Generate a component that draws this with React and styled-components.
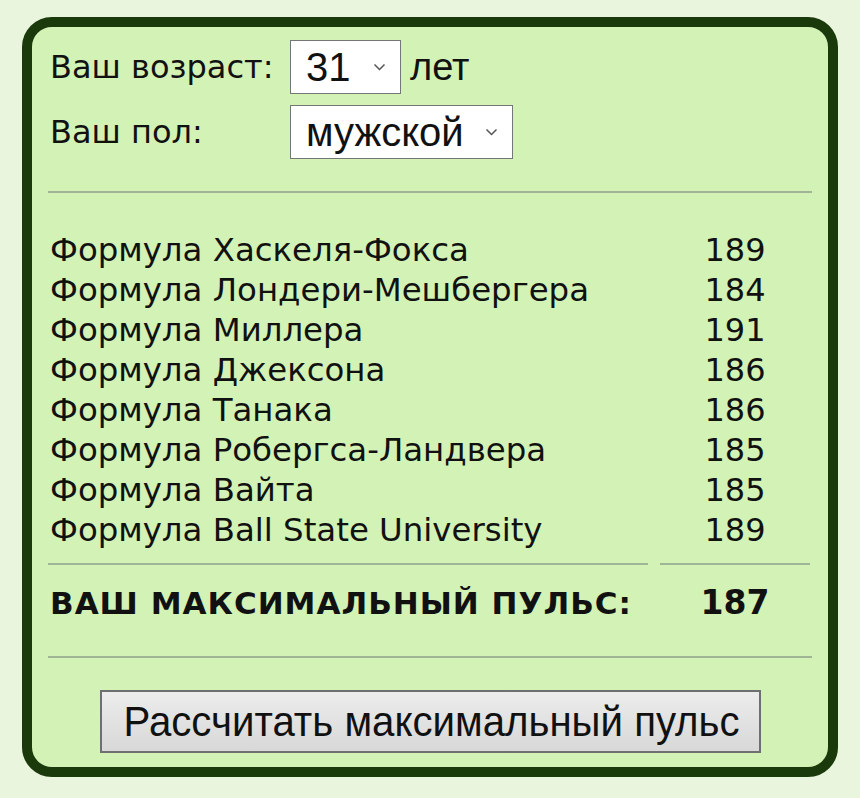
import styled, { createGlobalStyle } from "styled-components";

const formulas = [
  ["Формула Хаскеля-Фокса", 189],
  ["Формула Лондери-Мешбергера", 184],
  ["Формула Миллера", 191],
  ["Формула Джексона", 186],
  ["Формула Танака", 186],
  ["Формула Робергса-Ландвера", 185],
  ["Формула Вайта", 185],
  ["Формула Ball State University", 189],
];

const GlobalStyle = createGlobalStyle`
  body {
    margin: 0;
    background: #e9f6dd;
    font-family: "DejaVu Sans", Verdana, sans-serif;
    color: #111;
  }
`;

const App = () => {
  return (
    <>
      <GlobalStyle />
      <Card>
        <Form>
          <Label>Ваш возраст:</Label>
          <Field>
            <Select $w={111}>
              <span>31</span>
              <Chevron />
            </Select>
            <Unit>лет</Unit>
          </Field>
          <Label>Ваш пол:</Label>
          <Field>
            <Select $w={223}>
              <span>мужской</span>
              <Chevron />
            </Select>
          </Field>
        </Form>
        <Rule />
        <Table>
          <tbody>
            {formulas.map(([name, value], i) => (
              <Row key={name} $last={i === formulas.length - 1}>
                <Name>{name}</Name>
                <Value>{value}</Value>
              </Row>
            ))}
            <TotalRow>
              <TotalLabel>ВАШ МАКСИМАЛЬНЫЙ ПУЛЬС:</TotalLabel>
              <TotalValue>187</TotalValue>
            </TotalRow>
          </tbody>
        </Table>
        <Rule />
        <Actions>
          <Button>
            <ButtonText>Рассчитать максимальный пульс</ButtonText>
          </Button>
        </Actions>
      </Card>
    </>
  );
};

const Chevron = () => (
  <svg width="13" height="8" viewBox="0 0 13 8">
    <path d="M1.5 1.5l5 5 5-5" fill="none" stroke="#555" strokeWidth="1.5" />
  </svg>
);

const Card = styled.div({
  boxSizing: "border-box",
  width: "816px",
  height: "760px",
  margin: "17px 0 0 22px",
  border: "10px solid #1b3a0c",
  borderRadius: "30px",
  background: "#d3f2b5",
  padding: "13px 16px 0 16px",
});

const Form = styled.div({
  display: "grid",
  gridTemplateColumns: "240px auto",
  rowGap: "11px",
  alignItems: "center",
  paddingLeft: "2px",
});

const Label = styled.div({
  fontSize: "32px",
  lineHeight: "54px",
});

const Field = styled.div({
  display: "flex",
  alignItems: "center",
  gap: "9px",
});

const Select = styled.div(({ $w }) => ({
  boxSizing: "border-box",
  width: `${$w}px`,
  height: "54px",
  border: "1px solid #767676",
  background: "#fff",
  display: "flex",
  alignItems: "center",
  justifyContent: "space-between",
  padding: "0 14px 0 15px",
  fontFamily: '"Liberation Sans", Arial, sans-serif',
  fontSize: "40px",
}));

const Unit = styled.span({
  fontFamily: '"Liberation Sans", Arial, sans-serif',
  fontSize: "38px",
  lineHeight: "54px",
});

const Rule = styled.hr({
  border: 0,
  borderTop: "2px solid #9fb595",
  margin: "32px 0 0 0",
});

const Table = styled.table({
  width: "786px",
  marginTop: "37px",
  borderCollapse: "separate",
  borderSpacing: "12px 0",
  marginLeft: "-12px",
});

const Row = styled.tr(({ $last }) => ({
  "& > td": {
    borderBottom: $last ? "2px solid #9fb595" : "none",
    paddingBottom: $last ? "13px" : 0,
  },
}));

const Name = styled.td({
  fontSize: "32.4px",
  lineHeight: "40px",
  padding: "0 0 0 2px",
  width: "598px",
  whiteSpace: "nowrap",
});

const Value = styled.td({
  fontSize: "32px",
  lineHeight: "40px",
  padding: 0,
  textAlign: "center",
});

const TotalRow = styled.tr({
  "& > td": {
    paddingTop: "18px",
  },
});

const TotalLabel = styled.td({
  fontWeight: 700,
  fontSize: "31px",
  letterSpacing: "1px",
  lineHeight: "40px",
  paddingLeft: "2px",
  whiteSpace: "nowrap",
});

const TotalValue = styled.td({
  fontWeight: 700,
  fontSize: "33px",
  lineHeight: "40px",
  textAlign: "center",
});

const Actions = styled.div({
  display: "flex",
  justifyContent: "center",
  paddingTop: "32px",
});

const Button = styled.button({
  width: "661px",
  height: "63px",
  border: "2px solid #6f6f6f",
  background: "linear-gradient(#ececec, #d8d8d8)",
  fontFamily: '"Liberation Sans", Arial, sans-serif',
  fontSize: "43px",
  color: "#111",
  padding: 0,
});

const ButtonText = styled.span({
  display: "inline-block",
  transform: "scaleX(0.935)",
  whiteSpace: "nowrap",
});

export default App;
